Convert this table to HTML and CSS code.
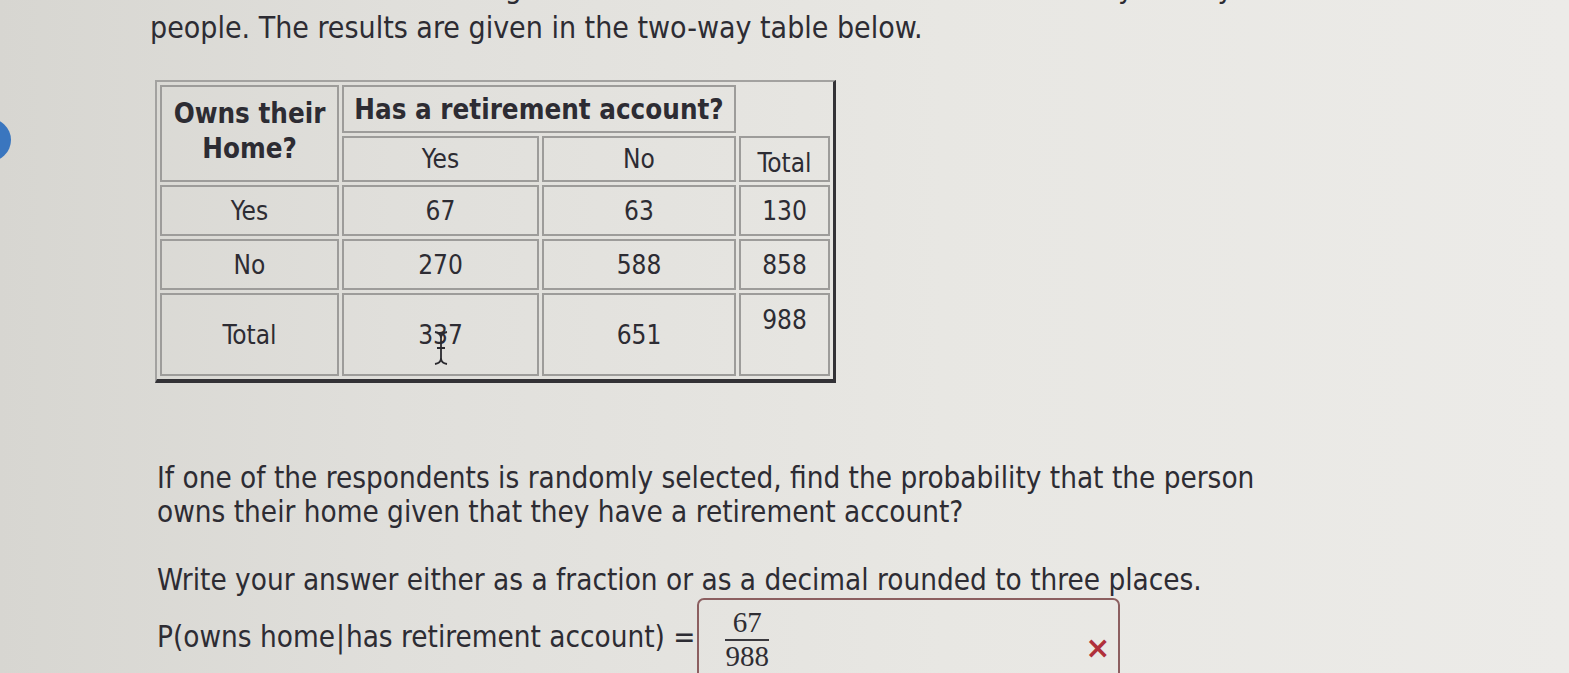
FILE: index.html
```html
<!DOCTYPE html>
<html>
<head>
<meta charset="utf-8">
<link rel="stylesheet" href="styles.css">
</head>
<body>
<div class="dot"></div>
<main class="page">
  <p class="line clipped">A researcher asks if owning a home is tied to a retirement account. They survey 988</p>
  <p class="line intro">people. The results are given in the two-way table below.</p>

  <table class="twoway">
    <tr class="r-head1">
      <th rowspan="2" class="c1 owns">Owns their<br>Home?</th>
      <th colspan="2" class="has">Has a retirement account?</th>
    </tr>
    <tr class="r-head2">
      <td class="c2">Yes</td>
      <td class="c3">No</td>
      <td class="c4 tot-h">Total</td>
    </tr>
    <tr class="r-data">
      <td class="c1">Yes</td>
      <td class="c2">67</td>
      <td class="c3">63</td>
      <td class="c4">130</td>
    </tr>
    <tr class="r-data">
      <td class="c1">No</td>
      <td class="c2">270</td>
      <td class="c3">588</td>
      <td class="c4">858</td>
    </tr>
    <tr class="r-total">
      <td class="c1">Total</td>
      <td class="c2 cursor-cell">337<svg class="ibeam" width="14" height="34" viewBox="0 0 14 34"><path d="M1 1 Q7 2 7 7 L7 27 Q7 32 1 33 M13 1 Q7 2 7 7 M7 27 Q7 32 13 33 M3 17 L11 17" fill="none" stroke="#2b2a2f" stroke-width="1.8"/></svg></td>
      <td class="c3">651</td>
      <td class="c4 top">988</td>
    </tr>
  </table>

  <p class="line q1">If one of the respondents is randomly selected, find the probability that the person<br>owns their home given that they have a retirement account?</p>
  <p class="line q2">Write your answer either as a fraction or as a decimal rounded to three places.</p>

  <div class="answer">
    <span class="label">P(owns home<span class="bar">|</span>has retirement account) =</span>
    <div class="box">
      <span class="frac"><span class="num">67</span><span class="den">988</span></span>
      <span class="wrong">×</span>
    </div>
  </div>
</main>
</body>
</html>
```

FILE: styles.css
```css
html, body {
  margin: 0;
  padding: 0;
}
body {
  width: 1569px;
  height: 673px;
  overflow: hidden;
  position: relative;
  background: linear-gradient(90deg, #d7d6d1 0%, #e0dfdb 25%, #e8e7e3 60%, #ecebe8 100%);
  font-family: "DejaVu Sans Condensed", "DejaVu Sans", sans-serif;
  color: #2d2c33;
  font-size: 29.4px;
}
.dot {
  position: absolute;
  left: -35px;
  top: 118px;
  width: 46px;
  height: 44px;
  border-radius: 50%;
  background: #3a76bf;
}
.page {
  padding-left: 150px;
}
.line {
  margin: 0;
  line-height: 34px;
}
.clipped {
  margin-top: -29px;
  white-space: nowrap;
  font-size: 30px;
}
.intro {
  margin-top: 6px;
  font-size: 30px;
}
.twoway {
  margin-top: 35px;
  margin-left: 5px;
  border-collapse: separate;
  border-spacing: 3px;
  border-style: solid;
  border-width: 2px 3px 4px 2px;
  border-color: #a3a2a0 #333236 #333236 #a3a2a0;
  font-size: 26px;
}
.twoway th, .twoway td {
  box-sizing: border-box;
  border: 2px solid #9d9c9a;
  text-align: center;
  padding: 0;
  font-weight: normal;
}
.twoway th {
  font-weight: bold;
  font-size: 27.5px;
}
.c1 { width: 179px; }
.c2 { width: 197px; }
.c3 { width: 194px; }
.c4 { width: 91px; }
.owns {
  vertical-align: top;
  padding-top: 9px !important;
  line-height: 35px;
}
.r-head1 th.has {
  height: 48px;
  line-height: 40px;
}
.r-head2 td { height: 46px; }
.r-head2 td.tot-h { padding-top: 8px; }
.r-data td { height: 51px; }
.r-total td { height: 83px; }
.r-total td.top { vertical-align: top; padding-top: 10px; }
.cursor-cell { position: relative; }
.ibeam {
  position: absolute;
  left: 90px;
  top: 36px;
}

.q1 {
  margin-top: 78px;
  margin-left: 7px;
}
.q2 {
  margin-top: 34px;
  margin-left: 7px;
}
.answer {
  display: flex;
  align-items: flex-start;
  margin-top: 1px;
  margin-left: 7px;
}
.label {
  margin-top: 22px;
  line-height: 34px;
  white-space: nowrap;
}
.bar {
  display: inline-block;
  margin: 0 1px;
}
.box {
  margin-left: 2px;
  width: 423px;
  height: 100px;
  flex-shrink: 0;
  border: 2px solid #8c5f60;
  border-radius: 7px;
  display: flex;
  align-items: flex-start;
  justify-content: space-between;
  padding: 0 8px 0 26px;
  box-sizing: border-box;
}
.frac {
  display: inline-flex;
  flex-direction: column;
  align-items: center;
  font-family: "Liberation Serif", serif;
  font-size: 29px;
  line-height: 26px;
  margin-top: 9px;
  color: #2e2d33;
}
.num {
  align-self: stretch;
  text-align: center;
  padding-bottom: 4px;
  border-bottom: 2px solid #3a393e;
}
.den {
  padding-top: 2px;
}
.wrong {
  color: #b0303a;
  font-family: "DejaVu Sans", sans-serif;
  font-size: 30px;
  font-weight: bold;
  margin-top: 30px;
}
```
